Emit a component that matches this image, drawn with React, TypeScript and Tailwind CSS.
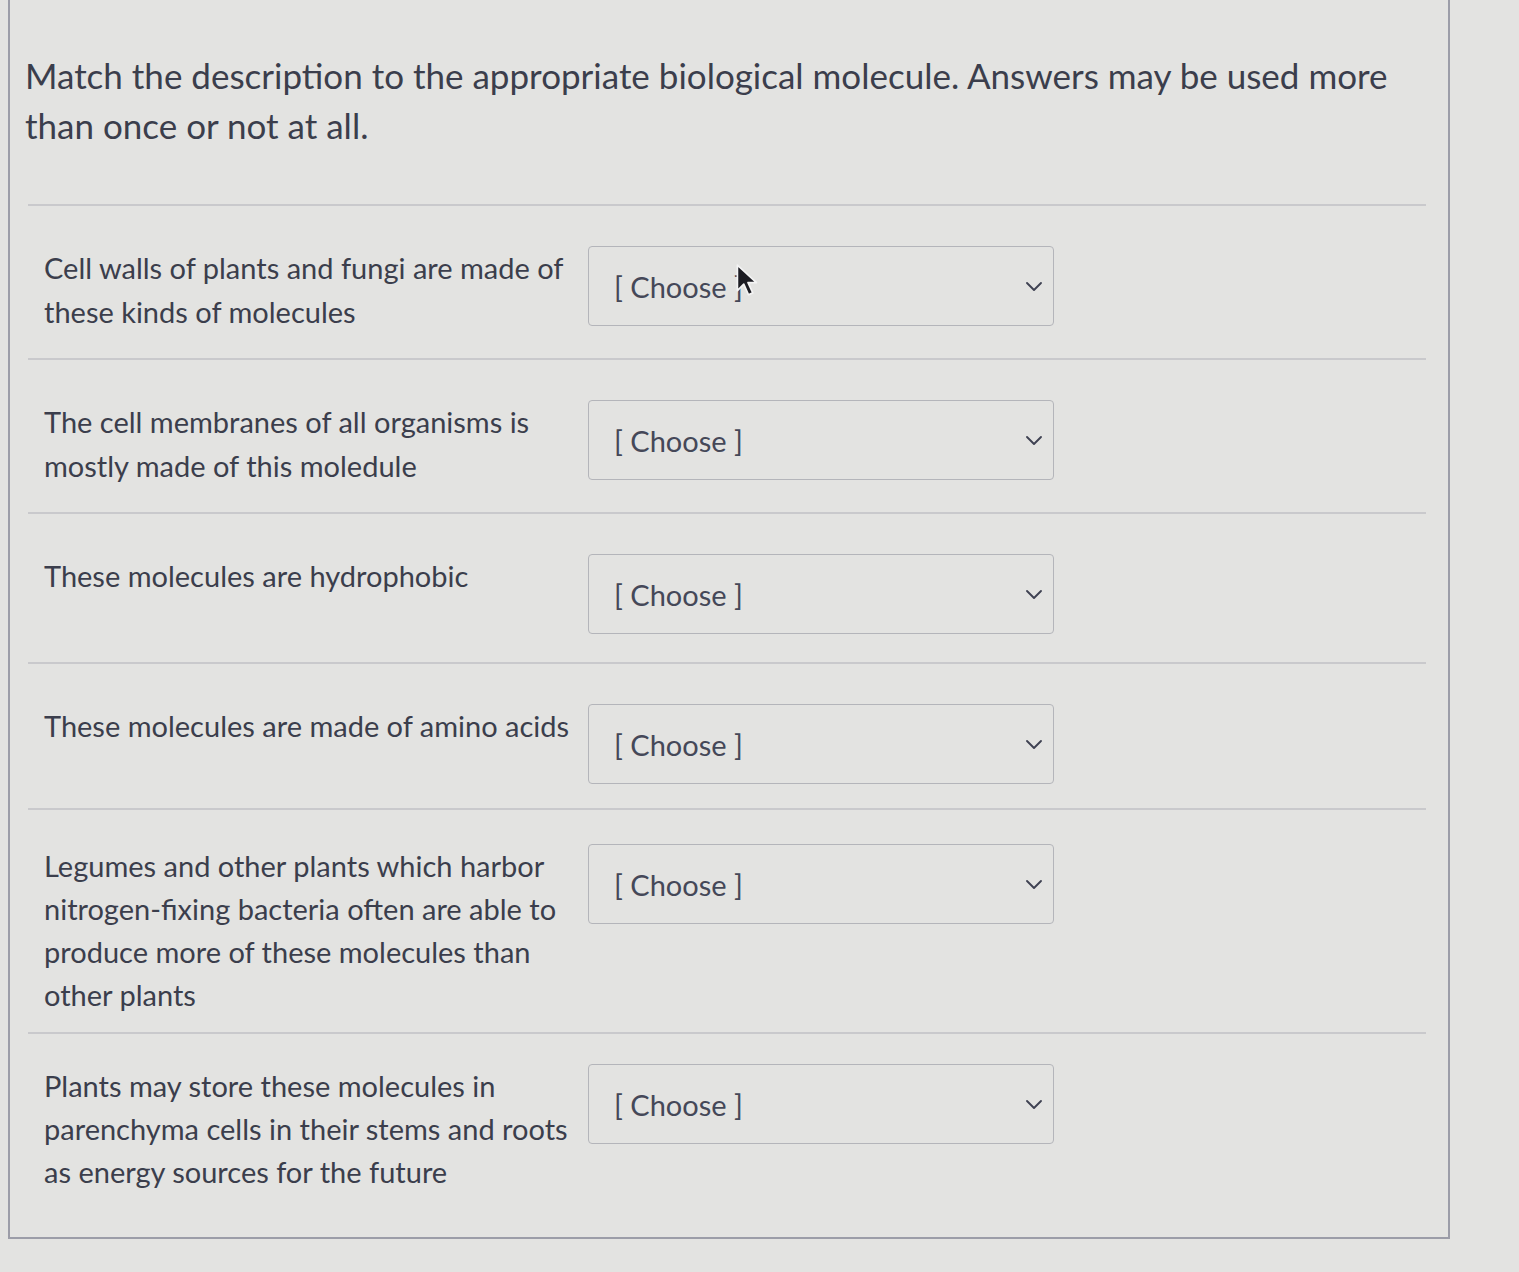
import React from 'react';

const rows: string[][] = [
  ['Cell walls of plants and fungi are made of', 'these kinds of molecules'],
  ['The cell membranes of all organisms is', 'mostly made of this moledule'],
  ['These molecules are hydrophobic'],
  ['These molecules are made of amino acids'],
  [
    'Legumes and other plants which harbor',
    'nitrogen-fixing bacteria often are able to',
    'produce more of these molecules than',
    'other plants',
  ],
  [
    'Plants may store these molecules in',
    'parenchyma cells in their stems and roots',
    'as energy sources for the future',
  ],
];

// vertical padding per row, tuned to the reference spacing
const pads = [
  'pt-[40px] pb-[24px]',
  'pt-[40px] pb-[24px]',
  'pt-[40px] pb-[28px]',
  'pt-[40px] pb-[24px]',
  'pt-[34px] pb-[16px]',
  'pt-[30px] pb-[44px]',
];

const Chevron = () => (
  <svg width="18" height="11" viewBox="0 0 18 11" fill="none" className="shrink-0">
    <path d="M2 2 L9 9 L16 2" stroke="#3f4252" strokeWidth="1.9" strokeLinecap="round" strokeLinejoin="round" />
  </svg>
);

const Cursor = () => (
  <svg width="26" height="36" viewBox="0 0 24 34" className="absolute left-[146px] top-[16px]">
    <path
      d="M2 2 L2 26 L8 20 L12.5 30 L16.5 28.2 L12 18.5 L20 18.5 Z"
      fill="#1c1c22"
      stroke="#f4f4f4"
      strokeWidth="1.6"
      strokeLinejoin="round"
    />
  </svg>
);

function ChooseBox({ cursor }: { cursor?: boolean }) {
  return (
    <div className="relative flex h-[80px] w-[466px] shrink-0 items-center justify-between rounded-[4px] border border-[#b4b5ba] pl-[25px] pr-[10px]">
      <span className="text-[29px] leading-none text-[#454858]">[ Choose ]</span>
      <Chevron />
      {cursor && <Cursor />}
    </div>
  );
}

export default function App() {
  return (
    <div
      className="min-h-[1272px] w-full bg-[#e3e3e1] pl-[8px] pt-0 text-[#3b3e4c]"
      style={{ fontFamily: 'Lato, "Open Sans", sans-serif' }}
    >
      <div className="w-[1442px] border-b-2 border-l-2 border-r-2 border-[#9c9da8]">
        <div className="px-[15px] pt-[50px] pb-[54px] text-[35px] leading-[50px] whitespace-nowrap">
          Match the description to the appropriate biological molecule. Answers may be used more
          <br />
          than once or not at all.
        </div>
        <div className="ml-[18px] mr-[22px]">
          {rows.map((lines, i) => (
            <div key={i} className={`flex border-t-2 border-[#c9c9cc] ${pads[i]}`}>
              <div
                className={`w-[560px] shrink-0 pl-[16px] text-[29px] whitespace-nowrap ${
                  i >= 4 ? 'leading-[43px]' : 'leading-[44px]'
                }`}
              >
                {lines.map((l, j) => (
                  <div key={j}>{l}</div>
                ))}
              </div>
              <ChooseBox cursor={i === 0} />
            </div>
          ))}
        </div>
      </div>
    </div>
  );
}
